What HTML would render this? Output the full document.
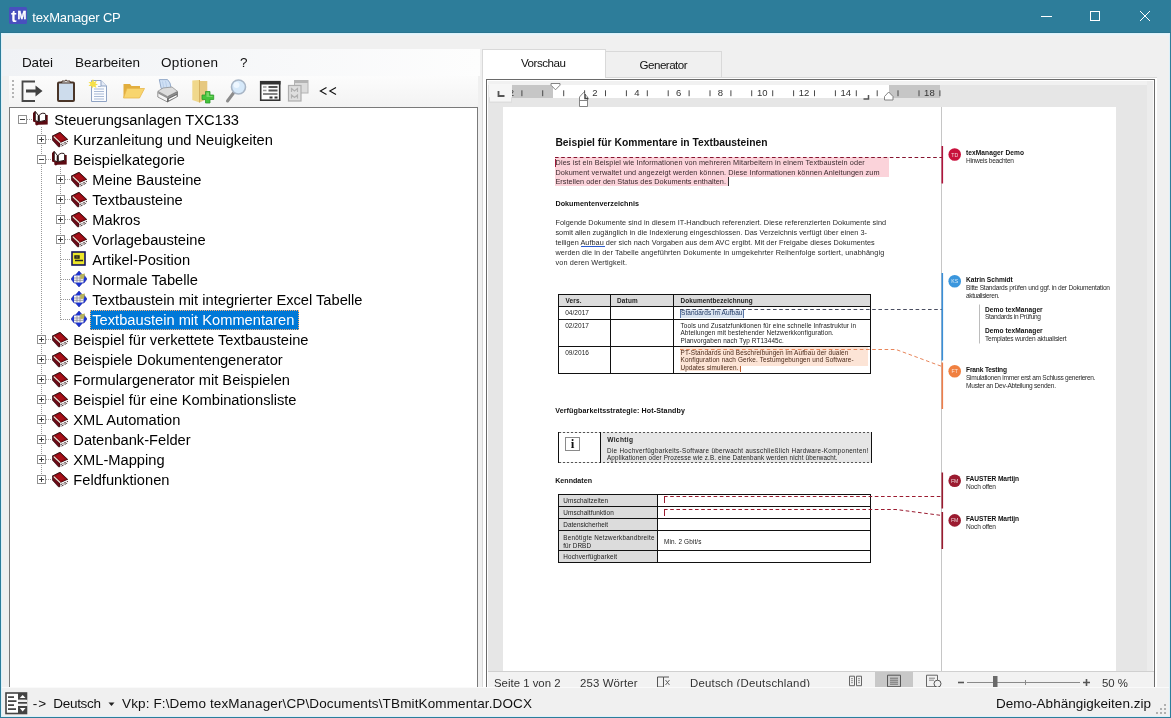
<!DOCTYPE html>
<html>
<head>
<meta charset="utf-8">
<title>texManager CP</title>
<style>
html,body{margin:0;padding:0;}
body{width:1171px;height:718px;overflow:hidden;position:relative;background:#f0f0f0;font-family:"Liberation Sans",sans-serif;color:#000;}
.abs{position:absolute;}
#win{position:absolute;left:0;top:0;width:1171px;height:718px;box-sizing:border-box;border-left:1px solid #2d7d9a;border-right:1px solid #2d7d9a;border-bottom:1px solid #2d7d9a;background:#f0f0f0;box-shadow:inset 1px 0 0 #dcf1fa,inset -1px 0 0 #dcf1fa,inset 0 -1px 0 #dcf1fa;}
#title{position:absolute;left:0;top:0;width:1171px;height:33px;background:#2d7d9a;box-shadow:inset 0 -1px 0 #2a7590;}
#title .ttl{position:absolute;left:32.3px;top:9px;font-size:13px;color:#fff;line-height:18px;white-space:nowrap;}
#menu span{position:absolute;top:55px;font-size:13.5px;line-height:16px;color:#111;white-space:nowrap;}
#toolbar{position:absolute;left:9px;top:76px;width:469px;height:31px;background:linear-gradient(#fcfcfc,#f3f3f3);border-radius:0 0 3px 0;}
#tree{position:absolute;left:9px;top:107px;width:469px;height:580px;box-sizing:border-box;background:#fff;border:1px solid #7a7a7a;border-bottom:none;}
.ti{position:absolute;font-size:14.67px;line-height:20px;height:20px;white-space:nowrap;color:#000;}
.vd{position:absolute;width:1px;background-image:linear-gradient(#9a9a9a 50%,transparent 50%);background-size:1px 2px;}
.hd{position:absolute;height:1px;background-image:linear-gradient(90deg,#9a9a9a 50%,transparent 50%);background-size:2px 1px;}
.bx{position:absolute;width:9px;height:9px;box-sizing:border-box;border:1px solid #919191;background:#fff;}
.bx:before{content:"";position:absolute;left:1px;top:3px;width:5px;height:1px;background:#444;}
.bx.p:after{content:"";position:absolute;left:3px;top:1px;width:1px;height:5px;background:#444;}
.ic{position:absolute;width:16px;height:16px;}
.wst{top:3.5px;font-size:11.4px;line-height:17px;color:#333;white-space:nowrap;}
.sb{top:695px;font-size:13.5px;line-height:18px;color:#111;white-space:nowrap;}
</style>
</head>
<body>
<div id="root" style="position:absolute;left:0;top:0;width:1171px;height:718px;overflow:hidden;will-change:transform">
<div id="win"></div>
<div id="title">
  <svg class="abs" style="left:9px;top:7px" width="18" height="17" viewBox="0 0 18 17"><rect x="0" y="0" width="18" height="17" rx="1.5" fill="#4850be"/><text x="2" y="15" font-family="Liberation Sans" font-weight="bold" font-size="16.5" fill="#fff">t</text><text x="8.6" y="12" font-family="Liberation Sans" font-weight="bold" font-size="10.5" fill="#fff" stroke="#fff" stroke-width="0.4">M</text></svg>
  <div class="ttl" style="letter-spacing:-0.152px;">texManager CP</div>
  <svg class="abs" style="left:1030px;top:0" width="141" height="32" viewBox="0 0 141 32" fill="none" stroke="#fff" stroke-width="1"><path d="M11 16.5H22"/><rect x="60.5" y="11.5" width="9" height="9"/><path d="M110 11L120 21M120 11L110 21"/></svg>
</div>
<div class="abs" style="left:1px;top:33px;width:1169px;height:1px;background:#dcf2fb"></div><div class="abs" style="left:2px;top:34px;width:1167px;height:1px;background:#e9f4f9"></div><div class="abs" style="left:2px;top:35px;width:1167px;height:1px;background:#eff2f4"></div>
<div class="abs" style="left:2px;top:49px;width:478px;height:27px;background:linear-gradient(90deg,#f0f2f5,#fdfdfd)"></div>
<div id="menu">
  <span style="letter-spacing:-0.129px;left:22px">Datei</span>
  <span style="letter-spacing:-0.035px;left:75px">Bearbeiten</span>
  <span style="letter-spacing:0.315px;left:161px">Optionen</span>
  <span style="left:240px">?</span>
</div>
<div id="toolbar"></div>
<div id="tree"></div>
<svg class="abs" style="left:0;top:72px" width="360" height="36" viewBox="0 72 360 36">
<g fill="#b4b4b4"><rect x="12" y="80" width="2" height="2"/><rect x="12" y="84" width="2" height="2"/><rect x="12" y="88" width="2" height="2"/><rect x="12" y="92" width="2" height="2"/><rect x="12" y="96" width="2" height="2"/></g>
<!-- exit -->
<path d="M35 81.5H22.5V101H35" fill="none" stroke="#484848" stroke-width="1.8"/>
<path d="M26 89.5H35.5V85.5L42.5 91L35.5 96.5V92.5H26Z" fill="#404040"/>
<!-- clipboard -->
<rect x="58" y="82.5" width="16" height="18.5" rx="1" fill="#cddcec" stroke="#4a3528" stroke-width="2"/>
<path d="M62 82.5V81H64.5Q66 79 67.5 81H70V82.5" fill="#d8d8d8" stroke="#4a3528" stroke-width="1"/>
<!-- new doc -->
<path d="M91.5 80.5H101L106.5 86V101.5H91.5Z" fill="#fafcff" stroke="#8fa3c4" stroke-width="1"/>
<path d="M101 80.5V86H106.5" fill="#e4ebf6" stroke="#8fa3c4" stroke-width="1"/>
<path d="M94 89H104M94 91.5H104M94 94H104M94 96.5H104M94 99H104M98 86.5H101" stroke="#a9bad6" stroke-width="1"/>
<path d="M93 79L94 82L97 80.5L95.5 83.5L98 84.5L95.5 85.5L96.5 88L93.5 86.5L92 88.5L91.5 86L88.5 86L90.5 84L88.5 82L91.5 82Z" fill="#f5e04a"/>
<!-- open folder -->
<path d="M123.5 84H130L131.5 86H140V97.5H123.5Z" fill="#e2ae3e"/>
<path d="M127 88.5H144.5L139.5 98H123.5Z" fill="#f8d56e" stroke="#e8b84c" stroke-width="0.8"/>
<!-- printer -->
<path d="M161.2 88.5L159.3 79.6H167.5Q170.5 82 171.2 88Z" fill="#cfe0f5" stroke="#8ba3c4" stroke-width="0.9"/>
<path d="M162.5 81.5L163.8 87.5M165.5 81L166.8 87.5" stroke="#b4c9e6" stroke-width="0.8" fill="none"/>
<path d="M157.8 91.3L163 88L172 87L177.5 91.3L167.5 96.5Z" fill="#dcdcdc" stroke="#8a8a8a" stroke-width="0.7"/>
<path d="M157.8 91.8L167.5 97L167.5 102L157.8 97Z" fill="#f4f4f4" stroke="#7c7c7c" stroke-width="0.8"/>
<path d="M167.5 97L177.5 91.8L177.5 96.5L167.5 102Z" fill="#6a6a6a" stroke="#555" stroke-width="0.5"/>
<path d="M158.5 93L167.5 97.8L177 92.8" fill="none" stroke="#909090" stroke-width="1.4"/>
<path d="M168.8 98.9L176.7 94.9V96.5L168.8 100.5Z" fill="#fff"/>
<!-- folder plus -->
<path d="M192.3 80.5L199.5 80V102.5L192.3 100Z" fill="#f0d88c"/>
<path d="M199.5 81H207.3V99L199.5 102.5Z" fill="#e6c880"/><path d="M199.5 80V102.5" stroke="#d4b060" stroke-width="1"/>
<path d="M205.5 91.5H210V95H213.7V99.5H210V103H205.5V99.5H202V95H205.5Z" fill="#44c43c" stroke="#2f9a2c" stroke-width="0.8"/>
<path d="M206.5 92.5H209V96H212.5V97H206.5Z" fill="#8fe07a" opacity="0.7"/>
<!-- magnifier -->
<path d="M233.5 93L227.5 101" stroke="#8c8c8c" stroke-width="3" stroke-linecap="round"/>
<circle cx="238.5" cy="87" r="7" fill="#d6e9fa" stroke="#a9b6c6" stroke-width="1.6"/>
<circle cx="236.5" cy="85" r="3" fill="#eef7ff"/>
<!-- form -->
<rect x="260.7" y="81.7" width="19" height="18.5" fill="#fdfdfd" stroke="#333" stroke-width="1.6"/>
<rect x="260" y="81" width="20.5" height="3.5" fill="#333"/>
<path d="M263 87H266.5M263 90.5H266.5" stroke="#999" stroke-width="1.4"/>
<path d="M268.5 87H277.5M268.5 90.5H277.5" stroke="#555" stroke-width="1.8"/>
<path d="M263 94H277.5" stroke="#777" stroke-width="1.8"/>
<path d="M269.5 97.5H272.5M274.5 97.5H277.5" stroke="#333" stroke-width="1.8"/>
<!-- grayed -->
<rect x="294.5" y="80.5" width="13.5" height="12.5" fill="#dcdcdc" stroke="#b4b4b4" stroke-width="1"/>
<rect x="294.5" y="80.5" width="13.5" height="2.5" fill="#b4b4b4"/>
<rect x="288.5" y="85.5" width="12.5" height="15.5" fill="#dedede" stroke="#aeaeae" stroke-width="1.2"/>
<path d="M291.5 92V88.5L294.5 91L297.5 88.5V92M291.5 98.5V95L294.5 97.5L297.5 95V98.5" fill="none" stroke="#b0b0b0" stroke-width="1.2"/>
<!-- << -->
<path d="M326.5 87.5L320.3 91L326.5 94.5M336 87.5L329.8 91L336 94.5" fill="none" stroke="#111" stroke-width="1.1"/>
</svg>
<div class="vd" style="left:41px;top:127px;height:353px"></div>
<div class="vd" style="left:60px;top:167px;height:153px"></div>
<div class="hd" style="left:27px;top:119px;width:6px"></div>
<div class="bx m" style="left:18px;top:115px"></div>
<svg class="ic" style="left:33px;top:111px" viewBox="0 0 16 16"><path d="M0 2L2.1 0.1L2.1 9.3L5 11L12.6 9.5L12.6 4L14.7 4L14.7 13.6L5.5 13.8L3.7 14.6L2.3 13.4L2.3 11.2L0 10.5Z" fill="#5c0a12"/><path d="M2.3 0.4L5.3 4.4L5.1 10.9L2.3 9.3Z" fill="#fff" stroke="#140002" stroke-width="0.9"/><path d="M6.2 4.2Q8 2.3 9.8 2.2L12 2.5L12.6 3.5L12.6 9.3L6.4 10.6Z" fill="#fff" stroke="#140002" stroke-width="0.9"/><path d="M5.7 4.4L5.7 11.2" stroke="#140002" stroke-width="0.9"/></svg>
<div class="ti" style="left:54.3px;top:110px">Steuerungsanlagen TXC133</div>
<div class="hd" style="left:46px;top:139px;width:6px"></div>
<div class="bx p" style="left:37px;top:135px"></div>
<svg class="ic" style="left:52px;top:132px" viewBox="0 0 16 16"><path d="M0.3 4.1L8 0.2L15.8 7.5L8.9 10.7Z" fill="#8c0c14" stroke="#1c0204" stroke-width="0.8"/><path d="M3.8 4.1L8 2L12.8 6.8L8.8 8.7Z" fill="#a81019"/><path d="M0.3 4.4L8 11.2L8 14.8L6.4 14.8L0.3 8Z" fill="#6a0a16" stroke="#1c0204" stroke-width="0.6"/><path d="M1.8 4.6L8.3 10.7" stroke="#fff2e2" stroke-width="1.15" fill="none"/><path d="M8.4 11L15.9 7.8L15.9 10.5L8.4 14.6Z" fill="#fff"/><path d="M8.4 12.8L15.9 9.3M9.5 14.1L15.9 10.8" stroke="#1c0204" stroke-width="0.8" stroke-dasharray="2.4 1.1" fill="none"/></svg>
<div class="ti" style="left:73.3px;top:130px">Kurzanleitung und Neuigkeiten</div>
<div class="hd" style="left:46px;top:159px;width:6px"></div>
<div class="bx m" style="left:37px;top:155px"></div>
<svg class="ic" style="left:52px;top:151px" viewBox="0 0 16 16"><path d="M0 2L2.1 0.1L2.1 9.3L5 11L12.6 9.5L12.6 4L14.7 4L14.7 13.6L5.5 13.8L3.7 14.6L2.3 13.4L2.3 11.2L0 10.5Z" fill="#5c0a12"/><path d="M2.3 0.4L5.3 4.4L5.1 10.9L2.3 9.3Z" fill="#fff" stroke="#140002" stroke-width="0.9"/><path d="M6.2 4.2Q8 2.3 9.8 2.2L12 2.5L12.6 3.5L12.6 9.3L6.4 10.6Z" fill="#fff" stroke="#140002" stroke-width="0.9"/><path d="M5.7 4.4L5.7 11.2" stroke="#140002" stroke-width="0.9"/></svg>
<div class="ti" style="left:73.3px;top:150px">Beispielkategorie</div>
<div class="hd" style="left:65px;top:179px;width:6px"></div>
<div class="bx p" style="left:56px;top:175px"></div>
<svg class="ic" style="left:71px;top:172px" viewBox="0 0 16 16"><path d="M0.3 4.1L8 0.2L15.8 7.5L8.9 10.7Z" fill="#8c0c14" stroke="#1c0204" stroke-width="0.8"/><path d="M3.8 4.1L8 2L12.8 6.8L8.8 8.7Z" fill="#a81019"/><path d="M0.3 4.4L8 11.2L8 14.8L6.4 14.8L0.3 8Z" fill="#6a0a16" stroke="#1c0204" stroke-width="0.6"/><path d="M1.8 4.6L8.3 10.7" stroke="#fff2e2" stroke-width="1.15" fill="none"/><path d="M8.4 11L15.9 7.8L15.9 10.5L8.4 14.6Z" fill="#fff"/><path d="M8.4 12.8L15.9 9.3M9.5 14.1L15.9 10.8" stroke="#1c0204" stroke-width="0.8" stroke-dasharray="2.4 1.1" fill="none"/></svg>
<div class="ti" style="left:92.3px;top:170px">Meine Bausteine</div>
<div class="hd" style="left:65px;top:199px;width:6px"></div>
<div class="bx p" style="left:56px;top:195px"></div>
<svg class="ic" style="left:71px;top:192px" viewBox="0 0 16 16"><path d="M0.3 4.1L8 0.2L15.8 7.5L8.9 10.7Z" fill="#8c0c14" stroke="#1c0204" stroke-width="0.8"/><path d="M3.8 4.1L8 2L12.8 6.8L8.8 8.7Z" fill="#a81019"/><path d="M0.3 4.4L8 11.2L8 14.8L6.4 14.8L0.3 8Z" fill="#6a0a16" stroke="#1c0204" stroke-width="0.6"/><path d="M1.8 4.6L8.3 10.7" stroke="#fff2e2" stroke-width="1.15" fill="none"/><path d="M8.4 11L15.9 7.8L15.9 10.5L8.4 14.6Z" fill="#fff"/><path d="M8.4 12.8L15.9 9.3M9.5 14.1L15.9 10.8" stroke="#1c0204" stroke-width="0.8" stroke-dasharray="2.4 1.1" fill="none"/></svg>
<div class="ti" style="left:92.3px;top:190px">Textbausteine</div>
<div class="hd" style="left:65px;top:219px;width:6px"></div>
<div class="bx p" style="left:56px;top:215px"></div>
<svg class="ic" style="left:71px;top:212px" viewBox="0 0 16 16"><path d="M0.3 4.1L8 0.2L15.8 7.5L8.9 10.7Z" fill="#8c0c14" stroke="#1c0204" stroke-width="0.8"/><path d="M3.8 4.1L8 2L12.8 6.8L8.8 8.7Z" fill="#a81019"/><path d="M0.3 4.4L8 11.2L8 14.8L6.4 14.8L0.3 8Z" fill="#6a0a16" stroke="#1c0204" stroke-width="0.6"/><path d="M1.8 4.6L8.3 10.7" stroke="#fff2e2" stroke-width="1.15" fill="none"/><path d="M8.4 11L15.9 7.8L15.9 10.5L8.4 14.6Z" fill="#fff"/><path d="M8.4 12.8L15.9 9.3M9.5 14.1L15.9 10.8" stroke="#1c0204" stroke-width="0.8" stroke-dasharray="2.4 1.1" fill="none"/></svg>
<div class="ti" style="left:92.3px;top:210px">Makros</div>
<div class="hd" style="left:65px;top:239px;width:6px"></div>
<div class="bx p" style="left:56px;top:235px"></div>
<svg class="ic" style="left:71px;top:232px" viewBox="0 0 16 16"><path d="M0.3 4.1L8 0.2L15.8 7.5L8.9 10.7Z" fill="#8c0c14" stroke="#1c0204" stroke-width="0.8"/><path d="M3.8 4.1L8 2L12.8 6.8L8.8 8.7Z" fill="#a81019"/><path d="M0.3 4.4L8 11.2L8 14.8L6.4 14.8L0.3 8Z" fill="#6a0a16" stroke="#1c0204" stroke-width="0.6"/><path d="M1.8 4.6L8.3 10.7" stroke="#fff2e2" stroke-width="1.15" fill="none"/><path d="M8.4 11L15.9 7.8L15.9 10.5L8.4 14.6Z" fill="#fff"/><path d="M8.4 12.8L15.9 9.3M9.5 14.1L15.9 10.8" stroke="#1c0204" stroke-width="0.8" stroke-dasharray="2.4 1.1" fill="none"/></svg>
<div class="ti" style="left:92.3px;top:230px">Vorlagebausteine</div>
<div class="hd" style="left:61px;top:259px;width:10px"></div>
<svg class="ic" style="left:71px;top:251px" viewBox="0 0 16 16"><rect x="1" y="1" width="13" height="13" fill="#ece62a" stroke="#15155e" stroke-width="1.6"/><path d="M4 5H8V7H4ZM4 9.5H12" stroke="#222" stroke-width="1.4" fill="none"/></svg>
<div class="ti" style="left:92.3px;top:250px">Artikel-Position</div>
<div class="hd" style="left:61px;top:279px;width:10px"></div>
<svg class="ic" style="left:71px;top:271px" viewBox="0 0 16 16"><path d="M8 0L11.5 4H13L16 8L13 12H11.5L8 16L4.5 12H3L0 8L3 4H4.5Z" fill="#1c34d4" stroke="#141a8a" stroke-width="0.5"/><rect x="3" y="4.5" width="9.5" height="7" fill="#f4f4f4"/><path d="M3 7H12.5M3 9.3H12.5M6 4.5V11.5M9 4.5V11.5" stroke="#8a8a9a" stroke-width="0.8"/><path d="M9 3.5L14 2.5L13 7.5L9.5 8Z" fill="#b8b45a"/></svg>
<div class="ti" style="left:92.3px;top:270px">Normale Tabelle</div>
<div class="hd" style="left:61px;top:299px;width:10px"></div>
<svg class="ic" style="left:71px;top:291px" viewBox="0 0 16 16"><path d="M8 0L11.5 4H13L16 8L13 12H11.5L8 16L4.5 12H3L0 8L3 4H4.5Z" fill="#1c34d4" stroke="#141a8a" stroke-width="0.5"/><rect x="3" y="4.5" width="9.5" height="7" fill="#f4f4f4"/><path d="M3 7H12.5M3 9.3H12.5M6 4.5V11.5M9 4.5V11.5" stroke="#8a8a9a" stroke-width="0.8"/><path d="M9 3.5L14 2.5L13 7.5L9.5 8Z" fill="#b8b45a"/></svg>
<div class="ti" style="left:92.3px;top:290px">Textbaustein mit integrierter Excel Tabelle</div>
<div class="hd" style="left:61px;top:319px;width:10px"></div>
<svg class="ic" style="left:71px;top:311px" viewBox="0 0 16 16"><path d="M8 0L11.5 4H13L16 8L13 12H11.5L8 16L4.5 12H3L0 8L3 4H4.5Z" fill="#1c34d4" stroke="#141a8a" stroke-width="0.5"/><rect x="3" y="4.5" width="9.5" height="7" fill="#f4f4f4"/><path d="M3 7H12.5M3 9.3H12.5M6 4.5V11.5M9 4.5V11.5" stroke="#8a8a9a" stroke-width="0.8"/><path d="M9 3.5L14 2.5L13 7.5L9.5 8Z" fill="#b8b45a"/></svg>
<div class="abs" style="left:90px;top:310px;width:209px;height:20px;background:#0078d7;box-sizing:border-box;border:1px dotted #ffb070"></div>
<div class="ti" style="left:92.3px;top:310px;color:#fff">Textbaustein mit Kommentaren</div>
<div class="hd" style="left:46px;top:339px;width:6px"></div>
<div class="bx p" style="left:37px;top:335px"></div>
<svg class="ic" style="left:52px;top:332px" viewBox="0 0 16 16"><path d="M0.3 4.1L8 0.2L15.8 7.5L8.9 10.7Z" fill="#8c0c14" stroke="#1c0204" stroke-width="0.8"/><path d="M3.8 4.1L8 2L12.8 6.8L8.8 8.7Z" fill="#a81019"/><path d="M0.3 4.4L8 11.2L8 14.8L6.4 14.8L0.3 8Z" fill="#6a0a16" stroke="#1c0204" stroke-width="0.6"/><path d="M1.8 4.6L8.3 10.7" stroke="#fff2e2" stroke-width="1.15" fill="none"/><path d="M8.4 11L15.9 7.8L15.9 10.5L8.4 14.6Z" fill="#fff"/><path d="M8.4 12.8L15.9 9.3M9.5 14.1L15.9 10.8" stroke="#1c0204" stroke-width="0.8" stroke-dasharray="2.4 1.1" fill="none"/></svg>
<div class="ti" style="left:73.3px;top:330px">Beispiel für verkettete Textbausteine</div>
<div class="hd" style="left:46px;top:359px;width:6px"></div>
<div class="bx p" style="left:37px;top:355px"></div>
<svg class="ic" style="left:52px;top:352px" viewBox="0 0 16 16"><path d="M0.3 4.1L8 0.2L15.8 7.5L8.9 10.7Z" fill="#8c0c14" stroke="#1c0204" stroke-width="0.8"/><path d="M3.8 4.1L8 2L12.8 6.8L8.8 8.7Z" fill="#a81019"/><path d="M0.3 4.4L8 11.2L8 14.8L6.4 14.8L0.3 8Z" fill="#6a0a16" stroke="#1c0204" stroke-width="0.6"/><path d="M1.8 4.6L8.3 10.7" stroke="#fff2e2" stroke-width="1.15" fill="none"/><path d="M8.4 11L15.9 7.8L15.9 10.5L8.4 14.6Z" fill="#fff"/><path d="M8.4 12.8L15.9 9.3M9.5 14.1L15.9 10.8" stroke="#1c0204" stroke-width="0.8" stroke-dasharray="2.4 1.1" fill="none"/></svg>
<div class="ti" style="left:73.3px;top:350px">Beispiele Dokumentengenerator</div>
<div class="hd" style="left:46px;top:379px;width:6px"></div>
<div class="bx p" style="left:37px;top:375px"></div>
<svg class="ic" style="left:52px;top:372px" viewBox="0 0 16 16"><path d="M0.3 4.1L8 0.2L15.8 7.5L8.9 10.7Z" fill="#8c0c14" stroke="#1c0204" stroke-width="0.8"/><path d="M3.8 4.1L8 2L12.8 6.8L8.8 8.7Z" fill="#a81019"/><path d="M0.3 4.4L8 11.2L8 14.8L6.4 14.8L0.3 8Z" fill="#6a0a16" stroke="#1c0204" stroke-width="0.6"/><path d="M1.8 4.6L8.3 10.7" stroke="#fff2e2" stroke-width="1.15" fill="none"/><path d="M8.4 11L15.9 7.8L15.9 10.5L8.4 14.6Z" fill="#fff"/><path d="M8.4 12.8L15.9 9.3M9.5 14.1L15.9 10.8" stroke="#1c0204" stroke-width="0.8" stroke-dasharray="2.4 1.1" fill="none"/></svg>
<div class="ti" style="left:73.3px;top:370px">Formulargenerator mit Beispielen</div>
<div class="hd" style="left:46px;top:399px;width:6px"></div>
<div class="bx p" style="left:37px;top:395px"></div>
<svg class="ic" style="left:52px;top:392px" viewBox="0 0 16 16"><path d="M0.3 4.1L8 0.2L15.8 7.5L8.9 10.7Z" fill="#8c0c14" stroke="#1c0204" stroke-width="0.8"/><path d="M3.8 4.1L8 2L12.8 6.8L8.8 8.7Z" fill="#a81019"/><path d="M0.3 4.4L8 11.2L8 14.8L6.4 14.8L0.3 8Z" fill="#6a0a16" stroke="#1c0204" stroke-width="0.6"/><path d="M1.8 4.6L8.3 10.7" stroke="#fff2e2" stroke-width="1.15" fill="none"/><path d="M8.4 11L15.9 7.8L15.9 10.5L8.4 14.6Z" fill="#fff"/><path d="M8.4 12.8L15.9 9.3M9.5 14.1L15.9 10.8" stroke="#1c0204" stroke-width="0.8" stroke-dasharray="2.4 1.1" fill="none"/></svg>
<div class="ti" style="left:73.3px;top:390px">Beispiel für eine Kombinationsliste</div>
<div class="hd" style="left:46px;top:419px;width:6px"></div>
<div class="bx p" style="left:37px;top:415px"></div>
<svg class="ic" style="left:52px;top:412px" viewBox="0 0 16 16"><path d="M0.3 4.1L8 0.2L15.8 7.5L8.9 10.7Z" fill="#8c0c14" stroke="#1c0204" stroke-width="0.8"/><path d="M3.8 4.1L8 2L12.8 6.8L8.8 8.7Z" fill="#a81019"/><path d="M0.3 4.4L8 11.2L8 14.8L6.4 14.8L0.3 8Z" fill="#6a0a16" stroke="#1c0204" stroke-width="0.6"/><path d="M1.8 4.6L8.3 10.7" stroke="#fff2e2" stroke-width="1.15" fill="none"/><path d="M8.4 11L15.9 7.8L15.9 10.5L8.4 14.6Z" fill="#fff"/><path d="M8.4 12.8L15.9 9.3M9.5 14.1L15.9 10.8" stroke="#1c0204" stroke-width="0.8" stroke-dasharray="2.4 1.1" fill="none"/></svg>
<div class="ti" style="left:73.3px;top:410px">XML Automation</div>
<div class="hd" style="left:46px;top:439px;width:6px"></div>
<div class="bx p" style="left:37px;top:435px"></div>
<svg class="ic" style="left:52px;top:432px" viewBox="0 0 16 16"><path d="M0.3 4.1L8 0.2L15.8 7.5L8.9 10.7Z" fill="#8c0c14" stroke="#1c0204" stroke-width="0.8"/><path d="M3.8 4.1L8 2L12.8 6.8L8.8 8.7Z" fill="#a81019"/><path d="M0.3 4.4L8 11.2L8 14.8L6.4 14.8L0.3 8Z" fill="#6a0a16" stroke="#1c0204" stroke-width="0.6"/><path d="M1.8 4.6L8.3 10.7" stroke="#fff2e2" stroke-width="1.15" fill="none"/><path d="M8.4 11L15.9 7.8L15.9 10.5L8.4 14.6Z" fill="#fff"/><path d="M8.4 12.8L15.9 9.3M9.5 14.1L15.9 10.8" stroke="#1c0204" stroke-width="0.8" stroke-dasharray="2.4 1.1" fill="none"/></svg>
<div class="ti" style="left:73.3px;top:430px">Datenbank-Felder</div>
<div class="hd" style="left:46px;top:459px;width:6px"></div>
<div class="bx p" style="left:37px;top:455px"></div>
<svg class="ic" style="left:52px;top:452px" viewBox="0 0 16 16"><path d="M0.3 4.1L8 0.2L15.8 7.5L8.9 10.7Z" fill="#8c0c14" stroke="#1c0204" stroke-width="0.8"/><path d="M3.8 4.1L8 2L12.8 6.8L8.8 8.7Z" fill="#a81019"/><path d="M0.3 4.4L8 11.2L8 14.8L6.4 14.8L0.3 8Z" fill="#6a0a16" stroke="#1c0204" stroke-width="0.6"/><path d="M1.8 4.6L8.3 10.7" stroke="#fff2e2" stroke-width="1.15" fill="none"/><path d="M8.4 11L15.9 7.8L15.9 10.5L8.4 14.6Z" fill="#fff"/><path d="M8.4 12.8L15.9 9.3M9.5 14.1L15.9 10.8" stroke="#1c0204" stroke-width="0.8" stroke-dasharray="2.4 1.1" fill="none"/></svg>
<div class="ti" style="left:73.3px;top:450px">XML-Mapping</div>
<div class="hd" style="left:46px;top:479px;width:6px"></div>
<div class="bx p" style="left:37px;top:475px"></div>
<svg class="ic" style="left:52px;top:472px" viewBox="0 0 16 16"><path d="M0.3 4.1L8 0.2L15.8 7.5L8.9 10.7Z" fill="#8c0c14" stroke="#1c0204" stroke-width="0.8"/><path d="M3.8 4.1L8 2L12.8 6.8L8.8 8.7Z" fill="#a81019"/><path d="M0.3 4.4L8 11.2L8 14.8L6.4 14.8L0.3 8Z" fill="#6a0a16" stroke="#1c0204" stroke-width="0.6"/><path d="M1.8 4.6L8.3 10.7" stroke="#fff2e2" stroke-width="1.15" fill="none"/><path d="M8.4 11L15.9 7.8L15.9 10.5L8.4 14.6Z" fill="#fff"/><path d="M8.4 12.8L15.9 9.3M9.5 14.1L15.9 10.8" stroke="#1c0204" stroke-width="0.8" stroke-dasharray="2.4 1.1" fill="none"/></svg>
<div class="ti" style="left:73.3px;top:470px">Feldfunktionen</div>

<div class="abs" style="left:482px;top:77px;width:675px;height:612px;background:#fff;border-top:1px solid #d9d9d9;border-left:1px solid #d9d9d9;box-sizing:border-box"></div>
<div class="abs" style="left:605px;top:51px;width:117px;height:27px;background:#f0f0f0;border:1px solid #d9d9d9;box-sizing:border-box"></div>
<div class="abs" style="letter-spacing:-0.525px;left:639.6px;top:52px;height:25px;line-height:25px;font-size:11.6px;color:#111;white-space:nowrap">Generator</div>
<div class="abs" style="left:482px;top:49px;width:124px;height:29px;background:#fff;border:1px solid #d9d9d9;border-bottom:none;box-sizing:border-box"></div>
<div class="abs" style="letter-spacing:-0.478px;left:521px;top:49.7px;height:28px;line-height:26px;font-size:11.6px;color:#111;white-space:nowrap">Vorschau</div>
<div class="abs" style="left:486px;top:79px;width:669px;height:609px;box-sizing:border-box;border:1px solid #6a6a6a;background:#e6e6e6"></div>
<div class="abs" style="left:487px;top:80px;width:667px;height:1px;background:#fff"></div>
<div class="abs" style="left:487px;top:80px;width:1px;height:608px;background:#fff"></div>
<div class="abs" style="left:1153px;top:81px;width:1px;height:607px;background:#fbfbfb"></div>
<div class="abs" style="left:488px;top:81px;width:659px;height:4px;background:#f1f1f1"></div>
<div class="abs" style="left:489px;top:84px;width:23px;height:19px;background:#f4f4f4"></div>
<div class="abs" style="left:489px;top:97px;width:23px;height:6px;background:#dcdcdc"></div>
<div class="abs" style="left:490px;top:84px;width:21px;height:17px;background:#f6f6f6"></div>
<div class="abs" style="left:512px;top:85px;width:41px;height:13px;background:#c6c6c6"></div>
<div class="abs" style="left:553px;top:85px;width:337px;height:13px;background:#fff"></div>
<div class="abs" style="left:888.5px;top:85px;width:51.5px;height:13px;background:#c6c6c6"></div>
<div class="abs" style="left:1147px;top:81px;width:6px;height:607px;background:#ececec"></div>
<svg class="abs" style="left:486px;top:79px" width="470" height="32" viewBox="486 79 470 32"><rect x="521.4" y="90.3" width="1" height="5.9" fill="#4a4a4a"/><rect x="542.2" y="90.3" width="1" height="5.9" fill="#4a4a4a"/><rect x="563.2" y="90.3" width="1" height="5.9" fill="#4a4a4a"/><rect x="584.1" y="90.3" width="1" height="5.9" fill="#4a4a4a"/><rect x="605" y="90.3" width="1" height="5.9" fill="#4a4a4a"/><rect x="625.9" y="90.3" width="1" height="5.9" fill="#4a4a4a"/><rect x="646.8" y="90.3" width="1" height="5.9" fill="#4a4a4a"/><rect x="667.7" y="90.3" width="1" height="5.9" fill="#4a4a4a"/><rect x="688.6" y="90.3" width="1" height="5.9" fill="#4a4a4a"/><rect x="709.5" y="90.3" width="1" height="5.9" fill="#4a4a4a"/><rect x="730.4" y="90.3" width="1" height="5.9" fill="#4a4a4a"/><rect x="751.2" y="90.3" width="1" height="5.9" fill="#4a4a4a"/><rect x="772.2" y="90.3" width="1" height="5.9" fill="#4a4a4a"/><rect x="793.1" y="90.3" width="1" height="5.9" fill="#4a4a4a"/><rect x="814" y="90.3" width="1" height="5.9" fill="#4a4a4a"/><rect x="834.9" y="90.3" width="1" height="5.9" fill="#4a4a4a"/><rect x="855.8" y="90.3" width="1" height="5.9" fill="#4a4a4a"/><rect x="876.7" y="90.3" width="1" height="5.9" fill="#4a4a4a"/><rect x="897.5" y="90.3" width="1" height="5.9" fill="#4a4a4a"/><rect x="918.5" y="90.3" width="1" height="5.9" fill="#4a4a4a"/><rect x="939.4" y="90.3" width="1" height="5.9" fill="#4a4a4a"/><text x="595" y="95.5" text-anchor="middle" font-family="Liberation Sans" font-size="9.5" fill="#333">2</text><text x="636.8" y="95.5" text-anchor="middle" font-family="Liberation Sans" font-size="9.5" fill="#333">4</text><text x="678.6" y="95.5" text-anchor="middle" font-family="Liberation Sans" font-size="9.5" fill="#333">6</text><text x="720.4" y="95.5" text-anchor="middle" font-family="Liberation Sans" font-size="9.5" fill="#333">8</text><text x="762.2" y="95.5" text-anchor="middle" font-family="Liberation Sans" font-size="9.5" fill="#333">10</text><text x="804" y="95.5" text-anchor="middle" font-family="Liberation Sans" font-size="9.5" fill="#333">12</text><text x="845.8" y="95.5" text-anchor="middle" font-family="Liberation Sans" font-size="9.5" fill="#333">14</text><text x="929.4" y="95.5" text-anchor="middle" font-family="Liberation Sans" font-size="9.5" fill="#333">18</text><text x="511.5" y="95.5" text-anchor="middle" font-family="Liberation Sans" font-size="9.5" fill="#333">2</text><rect x="489" y="84" width="23" height="13.5" fill="#f5f5f5"/><rect x="489" y="97.5" width="23" height="5.5" fill="#dedede"/><rect x="490" y="84" width="21" height="17.5" fill="#f6f6f6"/><path d="M498.5 91V96H504.5" fill="none" stroke="#555" stroke-width="1.8"/><path d="M551 83.5H560V85.2L555.5 89.8L551 85.2Z" fill="#fff" stroke="#777" stroke-width="0.9"/><path d="M579.5 106.5V97L583.5 92.5L587.5 97V106.5Z" fill="#fff" stroke="#777" stroke-width="0.9"/><path d="M579.5 100.5H587.5" stroke="#777" stroke-width="0.9"/><path d="M585 94V98.5H588.5" fill="none" stroke="#444" stroke-width="1.5"/><path d="M884.5 100V96.5L888.7 92L893 96.5V100Z" fill="#fff" stroke="#777" stroke-width="0.9"/><path d="M868.5 95V99H863.5" fill="none" stroke="#555" stroke-width="1.5"/></svg>
<div class="abs" style="left:503px;top:107px;width:613px;height:564px;background:#fff"></div>
<div class="abs" style="left:941px;top:107px;width:1px;height:564px;background:#c6c6c6"></div>
<div class="abs" style="letter-spacing:0.015px;left:555.4px;top:137px;font-size:10.3px;line-height:11px;height:11px;color:#111;white-space:nowrap;font-weight:bold;">Beispiel für Kommentare in Textbausteinen</div>
<div class="abs" style="left:555px;top:157px;width:334px;height:20px;background:#fbd3da"></div>
<div class="abs" style="left:555px;top:177px;width:173px;height:9px;background:#fbd3da"></div>
<div class="abs" style="left:727.5px;top:177px;width:1px;height:9px;background:#333"></div>
<div class="abs" style="left:555px;top:159px;width:1px;height:8px;background:#a01838"></div>
<div class="abs" style="letter-spacing:0.105px;left:555.6px;top:158px;font-size:7.3px;line-height:9px;height:9px;color:#3a2a2e;white-space:nowrap;">Dies ist ein Beispiel wie Informationen von mehreren Mitarbeitern in einem Textbaustein oder</div>
<div class="abs" style="letter-spacing:0.096px;left:555.4px;top:168px;font-size:7.3px;line-height:9px;height:9px;color:#3a2a2e;white-space:nowrap;">Dokument verwaltet und angezeigt werden können. Diese Informationen können Anleitungen zum</div>
<div class="abs" style="letter-spacing:0.038px;left:555.4px;top:177px;font-size:7.3px;line-height:9px;height:9px;color:#3a2a2e;white-space:nowrap;">Erstellen oder den Status des Dokuments enthalten.</div>
<div class="abs" style="letter-spacing:0.046px;left:555.4px;top:199px;font-size:7.2px;line-height:9px;height:9px;color:#111;white-space:nowrap;font-weight:bold;">Dokumentenverzeichnis</div>
<div class="abs" style="letter-spacing:0.054px;left:555.4px;top:218px;font-size:7.3px;line-height:9px;height:9px;color:#2a2a2a;white-space:nowrap;">Folgende Dokumente sind in diesem IT-Handbuch referenziert. Diese referenzierten Dokumente sind</div>
<div class="abs" style="letter-spacing:0.022px;left:555.4px;top:228px;font-size:7.3px;line-height:9px;height:9px;color:#2a2a2a;white-space:nowrap;">somit allen zugänglich in die Indexierung eingeschlossen. Das Verzeichnis verfügt über einen 3-</div>
<div class="abs" style="letter-spacing:0.034px;left:555.4px;top:238px;font-size:7.3px;line-height:9px;height:9px;color:#2a2a2a;white-space:nowrap;">teiligen Aufbau der sich nach Vorgaben aus dem AVC ergibt. Mit der Freigabe dieses Dokumentes</div>
<div class="abs" style="left:581px;top:246px;width:24px;height:1px;background:#2a5bd0"></div>
<div class="abs" style="letter-spacing:0.099px;left:555.4px;top:248px;font-size:7.3px;line-height:9px;height:9px;color:#2a2a2a;white-space:nowrap;">werden die in der Tabelle angeführten Dokumente in umgekehrter Reihenfolge sortiert, unabhängig</div>
<div class="abs" style="letter-spacing:0.139px;left:555.4px;top:258px;font-size:7.3px;line-height:9px;height:9px;color:#2a2a2a;white-space:nowrap;">von deren Wertigkeit.</div>
<div class="abs" style="left:558px;top:294px;width:313px;height:80px;box-sizing:border-box;border:1px solid #111;background:#fff"></div>
<div class="abs" style="left:559px;top:295px;width:311px;height:11px;background:#dcdcdc"></div>
<div class="abs" style="left:558px;top:306px;width:313px;height:1px;background:#111"></div>
<div class="abs" style="left:558px;top:319px;width:313px;height:1px;background:#111"></div>
<div class="abs" style="left:558px;top:346px;width:313px;height:1px;background:#111"></div>
<div class="abs" style="left:610px;top:294px;width:1px;height:80px;background:#111"></div>
<div class="abs" style="left:673px;top:294px;width:1px;height:80px;background:#111"></div>
<div class="abs" style="left:680px;top:309px;width:63.5px;height:9px;background:#dbe5f1;box-sizing:border-box;border-left:1px solid #5a78a8;border-right:1px solid #5a78a8"></div>
<div class="abs" style="left:680px;top:347px;width:187.5px;height:19px;background:#fce4d6"></div>
<div class="abs" style="left:680px;top:366px;width:60px;height:5px;background:#fce4d6"></div>
<div class="abs" style="letter-spacing:0.205px;left:565.4px;top:297px;font-size:6.4px;line-height:7px;height:7px;color:#1a1a1a;white-space:nowrap;font-weight:bold;">Vers.</div>
<div class="abs" style="letter-spacing:0.227px;left:617px;top:297px;font-size:6.4px;line-height:7px;height:7px;color:#1a1a1a;white-space:nowrap;font-weight:bold;">Datum</div>
<div class="abs" style="letter-spacing:0.105px;left:680.5px;top:297px;font-size:6.4px;line-height:7px;height:7px;color:#1a1a1a;white-space:nowrap;font-weight:bold;">Dokumentbezeichnung</div>
<div class="abs" style="letter-spacing:0.05px;left:565.2px;top:309px;font-size:6.5px;line-height:7px;height:7px;color:#1a1a1a;white-space:nowrap;">04/2017</div>
<div class="abs" style="letter-spacing:0.063px;left:681px;top:309px;font-size:6.5px;line-height:7px;height:7px;color:#1f3864;white-space:nowrap;">Standards im Aufbau</div>
<div class="abs" style="letter-spacing:0.05px;left:565.2px;top:322px;font-size:6.5px;line-height:7px;height:7px;color:#1a1a1a;white-space:nowrap;">02/2017</div>
<div class="abs" style="letter-spacing:0.113px;left:680.5px;top:322px;font-size:6.4px;line-height:7px;height:7px;color:#1a1a1a;white-space:nowrap;">Tools und Zusatzfunktionen für eine schnelle Infrastruktur in</div>
<div class="abs" style="letter-spacing:0.101px;left:680.5px;top:329px;font-size:6.4px;line-height:7px;height:7px;color:#1a1a1a;white-space:nowrap;">Abteilungen mit bestehender Netzwerkkonfiguration.</div>
<div class="abs" style="letter-spacing:0.112px;left:680.5px;top:337px;font-size:6.4px;line-height:7px;height:7px;color:#1a1a1a;white-space:nowrap;">Planvorgaben nach Typ RT13445c.</div>
<div class="abs" style="letter-spacing:0.05px;left:565.2px;top:349px;font-size:6.5px;line-height:7px;height:7px;color:#1a1a1a;white-space:nowrap;">09/2016</div>
<div class="abs" style="letter-spacing:0.12px;left:680.5px;top:349px;font-size:6.4px;line-height:7px;height:7px;color:#4a2a1a;white-space:nowrap;">PT-Standards und Beschreibungen im Aufbau der dualen</div>
<div class="abs" style="letter-spacing:0.125px;left:680.5px;top:356px;font-size:6.4px;line-height:7px;height:7px;color:#4a2a1a;white-space:nowrap;">Konfiguration nach Gerke. Testumgebungen und Software-</div>
<div class="abs" style="letter-spacing:0.073px;left:680.5px;top:364px;font-size:6.4px;line-height:7px;height:7px;color:#4a2a1a;white-space:nowrap;">Updates simulieren.</div>
<div class="abs" style="left:740px;top:366px;width:1px;height:6px;background:#c06030"></div>
<div class="abs" style="letter-spacing:0.127px;left:555.2px;top:407px;font-size:7.1px;line-height:8px;height:8px;color:#111;white-space:nowrap;font-weight:bold;">Verfügbarkeitsstrategie: Hot-Standby</div>
<div class="abs" style="left:558px;top:432px;width:314px;height:31px;box-sizing:border-box;background:#e6e6e6;border-left:1px solid #111"></div>
<div class="abs" style="left:559px;top:432px;width:312px;height:1px;background-image:linear-gradient(90deg,#555 62%,transparent 62%);background-size:4px 1px"></div>
<div class="abs" style="left:559px;top:462px;width:312px;height:1px;background-image:linear-gradient(90deg,#555 62%,transparent 62%);background-size:4px 1px"></div>
<div class="abs" style="left:559px;top:433px;width:42px;height:29px;background:#fff"></div>
<div class="abs" style="left:600px;top:432px;width:1px;height:31px;background:#111"></div>
<div class="abs" style="left:871px;top:432px;width:1px;height:31px;background:#111"></div>
<div class="abs" style="left:565px;top:437px;width:15px;height:14px;box-sizing:border-box;border:1px solid #8a8a8a;background:#fff"></div>
<div class="abs" style="left:565px;top:437px;width:15px;height:14px;line-height:14px;text-align:center;font-family:'Liberation Serif',serif;font-weight:bold;font-size:13px;color:#111">i</div>
<div class="abs" style="letter-spacing:0.342px;left:607.2px;top:436px;font-size:6.6px;line-height:7px;height:7px;color:#1a1a1a;white-space:nowrap;font-weight:bold;">Wichtig</div>
<div class="abs" style="letter-spacing:0.321px;left:607px;top:447px;font-size:6.3px;line-height:7px;height:7px;color:#1a1a1a;white-space:nowrap;">Die Hochverfügbarkeits-Software überwacht ausschließlich Hardware-Komponenten!</div>
<div class="abs" style="letter-spacing:0.146px;left:607px;top:454px;font-size:6.3px;line-height:7px;height:7px;color:#1a1a1a;white-space:nowrap;">Applikationen oder Prozesse wie z.B. eine Datenbank werden nicht überwacht.</div>
<div class="abs" style="letter-spacing:0.018px;left:555.2px;top:477px;font-size:7.1px;line-height:8px;height:8px;color:#111;white-space:nowrap;font-weight:bold;">Kenndaten</div>
<div class="abs" style="left:558px;top:494px;width:313px;height:69px;box-sizing:border-box;border:1px solid #111;background:#fff"></div>
<div class="abs" style="left:559px;top:495px;width:98px;height:67px;background:#dcdcdc"></div>
<div class="abs" style="left:558px;top:506px;width:313px;height:1px;background:#111"></div>
<div class="abs" style="left:558px;top:518px;width:313px;height:1px;background:#111"></div>
<div class="abs" style="left:558px;top:530px;width:313px;height:1px;background:#111"></div>
<div class="abs" style="left:558px;top:550px;width:313px;height:1px;background:#111"></div>
<div class="abs" style="left:657px;top:494px;width:1px;height:69px;background:#111"></div>
<div class="abs" style="letter-spacing:0.078px;left:563.3px;top:497px;font-size:6.4px;line-height:7px;height:7px;color:#1a1a1a;white-space:nowrap;">Umschaltzeiten</div>
<div class="abs" style="letter-spacing:0.098px;left:563.3px;top:509px;font-size:6.4px;line-height:7px;height:7px;color:#1a1a1a;white-space:nowrap;">Umschaltfunktion</div>
<div class="abs" style="letter-spacing:0.021px;left:563.3px;top:521px;font-size:6.4px;line-height:7px;height:7px;color:#1a1a1a;white-space:nowrap;">Datensicherheit</div>
<div class="abs" style="letter-spacing:0.25px;left:563.3px;top:534px;font-size:6.3px;line-height:7px;height:7px;color:#1a1a1a;white-space:nowrap;">Benötigte Netzwerkbandbreite</div>
<div class="abs" style="letter-spacing:0.051px;left:563.3px;top:542px;font-size:6.4px;line-height:7px;height:7px;color:#1a1a1a;white-space:nowrap;">für DRBD</div>
<div class="abs" style="letter-spacing:0.127px;left:664px;top:538px;font-size:6.4px;line-height:7px;height:7px;color:#1a1a1a;white-space:nowrap;">Min. 2 Gbit/s</div>
<div class="abs" style="letter-spacing:0.114px;left:563.3px;top:553px;font-size:6.4px;line-height:7px;height:7px;color:#1a1a1a;white-space:nowrap;">Hochverfügbarkeit</div>
<div class="abs" style="left:664px;top:497px;width:1px;height:6px;background:#9b1b30"></div>
<div class="abs" style="left:664px;top:510px;width:1px;height:6px;background:#9b1b30"></div>
<svg class="abs" style="left:503px;top:107px" width="613" height="565" viewBox="503 107 613 565" fill="none" stroke-width="1"><path d="M555 157.5H942" stroke="#86142f" stroke-dasharray="3.6 2.6"/><path d="M680 309.5H942" stroke="#4a4e60" stroke-dasharray="3.6 2.6"/><path d="M680 349.5H896L942 366.5" stroke="#e8855a" stroke-dasharray="3.6 2.6"/><path d="M664 496.5H942" stroke="#9b1b30" stroke-dasharray="3.6 2.6"/><path d="M664 509.5H896L942 515.5" stroke="#9b1b30" stroke-dasharray="3.6 2.6"/><path d="M942.3 146V183.5" stroke="#b0143c" stroke-width="1.6"/><path d="M942.3 273V360.5" stroke="#3a8fd8" stroke-width="1.6"/><path d="M942.3 362.5V409" stroke="#ee7e4a" stroke-width="1.6"/><path d="M942.3 472.5V508.5" stroke="#9b1b30" stroke-width="1.6"/><path d="M942.3 512V549" stroke="#9b1b30" stroke-width="1.6"/><path d="M979.5 304.5V343.5" stroke="#bcbcbc" stroke-width="1"/><circle cx="954.7" cy="154.5" r="6.3" fill="#c8103c" stroke="none"/><text x="954.7" y="156.5" text-anchor="middle" font-family="Liberation Sans" font-size="5.2" fill="#fff" fill-opacity="0.8" stroke="none">TD</text><circle cx="954.7" cy="281.3" r="6.3" fill="#3a96dd" stroke="none"/><text x="954.7" y="283.3" text-anchor="middle" font-family="Liberation Sans" font-size="5.2" fill="#fff" fill-opacity="0.8" stroke="none">KS</text><circle cx="954.7" cy="371.2" r="6.3" fill="#f08040" stroke="none"/><text x="954.7" y="373.2" text-anchor="middle" font-family="Liberation Sans" font-size="5.2" fill="#fff" fill-opacity="0.8" stroke="none">FT</text><circle cx="954.7" cy="480.8" r="6.3" fill="#9b1b30" stroke="none"/><text x="954.7" y="482.8" text-anchor="middle" font-family="Liberation Sans" font-size="5.2" fill="#fff" fill-opacity="0.8" stroke="none">FM</text><circle cx="954.7" cy="520.4" r="6.3" fill="#9b1b30" stroke="none"/><text x="954.7" y="522.4" text-anchor="middle" font-family="Liberation Sans" font-size="5.2" fill="#fff" fill-opacity="0.8" stroke="none">FM</text></svg>
<div class="abs" style="letter-spacing:0.085px;left:966px;top:149px;font-size:6.6px;line-height:7px;height:7px;color:#111;white-space:nowrap;font-weight:bold;">texManager Demo</div>
<div class="abs" style="letter-spacing:-0.271px;left:966px;top:157px;font-size:6.6px;line-height:7px;height:7px;color:#2a2a2a;white-space:nowrap;">Hinweis beachten</div>
<div class="abs" style="letter-spacing:-0.008px;left:966px;top:276px;font-size:6.6px;line-height:7px;height:7px;color:#111;white-space:nowrap;font-weight:bold;">Katrin Schmidt</div>
<div class="abs" style="letter-spacing:-0.231px;left:966px;top:284px;font-size:6.6px;line-height:7px;height:7px;color:#2a2a2a;white-space:nowrap;">Bitte Standards prüfen und ggf. in der Dokumentation</div>
<div class="abs" style="letter-spacing:-0.412px;left:966px;top:292px;font-size:6.6px;line-height:7px;height:7px;color:#2a2a2a;white-space:nowrap;">aktualisieren.</div>
<div class="abs" style="letter-spacing:0.063px;left:985px;top:306px;font-size:6.6px;line-height:7px;height:7px;color:#111;white-space:nowrap;font-weight:bold;">Demo texManager</div>
<div class="abs" style="letter-spacing:-0.313px;left:985px;top:313px;font-size:6.6px;line-height:7px;height:7px;color:#2a2a2a;white-space:nowrap;">Standards in Prüfung</div>
<div class="abs" style="letter-spacing:0.063px;left:985px;top:327px;font-size:6.6px;line-height:7px;height:7px;color:#111;white-space:nowrap;font-weight:bold;">Demo texManager</div>
<div class="abs" style="letter-spacing:-0.188px;left:985px;top:335px;font-size:6.6px;line-height:7px;height:7px;color:#2a2a2a;white-space:nowrap;">Templates wurden aktualisiert</div>
<div class="abs" style="letter-spacing:-0.146px;left:966px;top:366px;font-size:6.6px;line-height:7px;height:7px;color:#111;white-space:nowrap;font-weight:bold;">Frank Testing</div>
<div class="abs" style="letter-spacing:-0.28px;left:966px;top:374px;font-size:6.6px;line-height:7px;height:7px;color:#2a2a2a;white-space:nowrap;">Simulationen immer erst am Schluss generieren.</div>
<div class="abs" style="letter-spacing:-0.263px;left:966px;top:382px;font-size:6.6px;line-height:7px;height:7px;color:#2a2a2a;white-space:nowrap;">Muster an Dev-Abteilung senden.</div>
<div class="abs" style="letter-spacing:-0.087px;left:966px;top:475px;font-size:6.6px;line-height:7px;height:7px;color:#111;white-space:nowrap;font-weight:bold;">FAUSTER Martijn</div>
<div class="abs" style="letter-spacing:-0.198px;left:966px;top:483px;font-size:6.6px;line-height:7px;height:7px;color:#2a2a2a;white-space:nowrap;">Noch offen</div>
<div class="abs" style="letter-spacing:-0.087px;left:966px;top:515px;font-size:6.6px;line-height:7px;height:7px;color:#111;white-space:nowrap;font-weight:bold;">FAUSTER Martijn</div>
<div class="abs" style="letter-spacing:-0.198px;left:966px;top:523px;font-size:6.6px;line-height:7px;height:7px;color:#2a2a2a;white-space:nowrap;">Noch offen</div>

<div class="abs" style="left:488px;top:671px;width:666px;height:16px;background:#f2f2f2;overflow:hidden">
 <div class="abs" style="left:0;top:0;width:667px;height:1px;background:#d0d0d0"></div>
 <div class="abs" style="left:387px;top:1px;width:38px;height:15px;background:#c8c8c8"></div>
 <div class="abs wst" style="letter-spacing:0px;left:6px">Seite 1 von 2</div>
 <div class="abs wst" style="letter-spacing:0.128px;left:92px">253 Wörter</div>
 <div class="abs wst" style="letter-spacing:0.207px;left:202px">Deutsch (Deutschland)</div>
 <div class="abs wst" style="letter-spacing:0.01px;left:614px">50 %</div>
 <svg class="abs" style="left:0;top:0" width="667" height="16" viewBox="488 671 667 16" fill="none" stroke="#555" stroke-width="1">
  <path d="M657.5 677V687H663.5V677ZM663.5 677H669" /><path d="M665.5 680L669.5 685M669.5 680L665.5 685" stroke-width="0.9"/>
  <g transform="translate(0,-1.3)">
  <path d="M849.5 677.5H854.5V687H849.5ZM856.5 677.5H861.5V687H856.5Z" stroke="#666"/><path d="M851 680H853M851 682H853M851 684H853M858 680H860M858 682H860M858 684H860" stroke="#777" stroke-width="0.8"/>
  <path d="M887.5 676.5H900.5V688H887.5Z" stroke="#555"/><path d="M890 679.5H898M890 681.5H898M890 683.5H898M890 685.5H898" stroke="#666" stroke-width="0.9"/>
  <path d="M926.5 676.5H937.5V688H926.5Z" stroke="#666"/><path d="M929 679.5H935M929 681.5H934" stroke="#777" stroke-width="0.9"/><circle cx="937.5" cy="685" r="3.5" fill="#f1f1f1" stroke="#555"/>
  </g>
  <path d="M958 682.5H964" stroke="#555" stroke-width="1.6"/>
  <path d="M967 682.5H1080" stroke="#8a8a8a"/><path d="M1025.5 680V685" stroke="#8a8a8a"/>
  <rect x="993" y="676" width="4.5" height="12" fill="#6a6a6a" stroke="none"/>
  <path d="M1083 682.5H1090M1086.5 679V686" stroke="#555" stroke-width="1.6"/>
 </svg>
</div>
<div class="abs" style="left:2px;top:687px;width:1167px;height:29px;background:#f0f0f0"></div>
<div class="abs" style="left:2px;top:687px;width:1167px;height:1px;background:#fafafa"></div>
<svg class="abs" style="left:0;top:687px" width="60" height="29" viewBox="0 687 60 29">
 <rect x="6" y="693" width="20.5" height="20.5" fill="#fff" stroke="#444" stroke-width="1.6"/>
 <rect x="8" y="696.3" width="6" height="1.6" fill="#333"/><rect x="8" y="700.3" width="8.5" height="1.6" fill="#333"/><rect x="8" y="704.3" width="6" height="1.6" fill="#333"/><rect x="8" y="708.3" width="8" height="1.6" fill="#333"/>
 <rect x="18" y="693" width="9" height="6.8" fill="#444"/><path d="M19.8 698H25.5L22.65 695Z" fill="#fff"/>
 <rect x="18" y="699.8" width="9.5" height="6.2" fill="#f0f0f0"/><rect x="18" y="702" width="9" height="1.7" fill="#444"/>
 <rect x="18" y="706" width="9" height="7.5" fill="#444"/><path d="M19.8 708H25.5L22.65 711.5Z" fill="#fff"/>
</svg>
<div class="abs sb" style="letter-spacing:0.909px;left:32.8px">-&gt;</div><div class="abs sb" style="letter-spacing:-0.305px;left:53.3px">Deutsch</div>
<svg class="abs" style="left:108px;top:701.5px" width="8" height="5" viewBox="0 0 8 5"><path d="M0.5 0.5H6.5L3.5 4Z" fill="#222"/></svg>
<div class="abs sb" style="letter-spacing:0.129px;left:122px">Vkp: F:\Demo texManager\CP\Documents\TBmitKommentar.DOCX</div>
<div class="abs" style="letter-spacing:0.018px;left:996px;top:695px;font-size:13.5px;line-height:18px;white-space:nowrap;color:#111">Demo-Abhängigkeiten.zip</div>
<svg class="abs" style="left:1155px;top:703px" width="14" height="14" viewBox="0 0 14 14" fill="#b0b0b0"><rect x="9" y="1" width="2" height="2"/><rect x="5" y="5" width="2" height="2"/><rect x="9" y="5" width="2" height="2"/><rect x="1" y="9" width="2" height="2"/><rect x="5" y="9" width="2" height="2"/><rect x="9" y="9" width="2" height="2"/></svg>

</div>
</body>
</html>
